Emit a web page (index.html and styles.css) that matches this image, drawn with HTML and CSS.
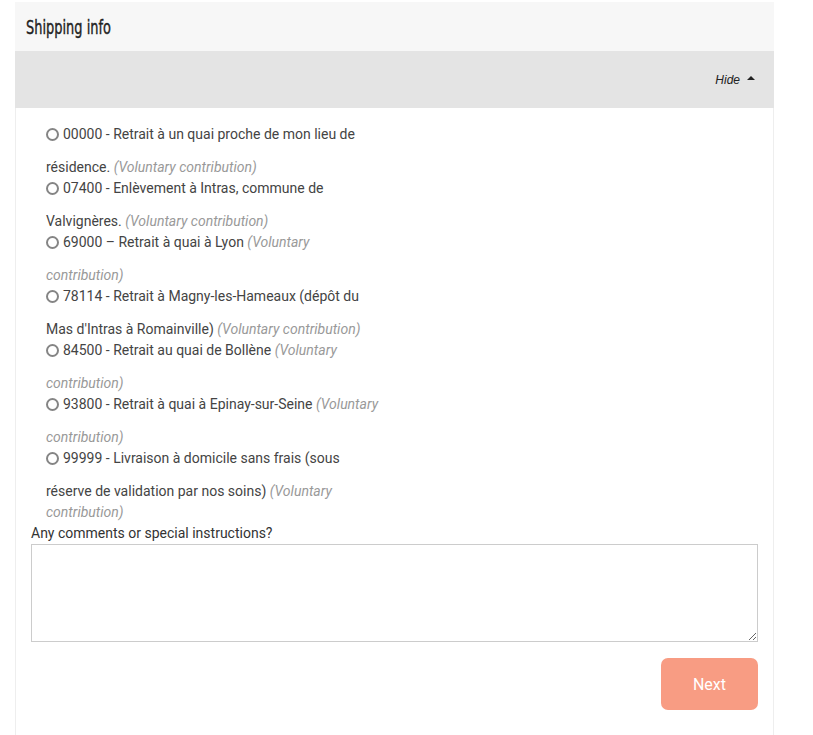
FILE: index.html
```html
<!DOCTYPE html>
<html>
<head>
<meta charset="utf-8">
<link rel="stylesheet" href="styles.css">
</head>
<body>
<div class="card">
  <div class="card-head"><h2 class="title">Shipping info</h2></div>
  <div class="toggle-bar"><span class="hide">Hide</span><span class="caret"></span></div>
  <div class="card-body">
    <ul class="options">
      <li class="opt"><span class="radio-box"><span class="radio"></span></span>00000 - Retrait à un quai proche de mon lieu de résidence. <em class="note">(Voluntary contribution)</em></li>
      <li class="opt"><span class="radio-box"><span class="radio"></span></span>07400 - Enlèvement à Intras, commune de Valvignères. <em class="note">(Voluntary contribution)</em></li>
      <li class="opt"><span class="radio-box"><span class="radio"></span></span>69000 – Retrait à quai à Lyon <em class="note">(Voluntary contribution)</em></li>
      <li class="opt"><span class="radio-box"><span class="radio"></span></span>78114 - Retrait à Magny-les-Hameaux (dépôt du Mas d'Intras à Romainville) <em class="note">(Voluntary contribution)</em></li>
      <li class="opt"><span class="radio-box"><span class="radio"></span></span>84500 - Retrait au quai de Bollène <em class="note">(Voluntary contribution)</em></li>
      <li class="opt"><span class="radio-box"><span class="radio"></span></span>93800 - Retrait à quai à Epinay-sur-Seine <em class="note">(Voluntary contribution)</em></li>
      <li class="opt"><span class="radio-box"><span class="radio"></span></span>99999 - Livraison à domicile sans frais (sous réserve de validation par nos soins) <em class="note">(Voluntary contribution)</em></li>
    </ul>
    <label class="comments-label">Any comments or special instructions?</label>
    <textarea class="comments"></textarea>
    <div class="actions"><button class="next">Next</button></div>
  </div>
</div>
</body>
</html>
```
FILE: styles.css
```css
html, body {
  margin: 0;
  padding: 0;
  background: #fff;
}
body {
  font-family: Roboto, "Liberation Sans", sans-serif;
}
.card {
  margin: 2px 0 0 15px;
  width: 759px;
  box-sizing: border-box;
  height: 733px;
  border-left: 1px solid #eeeeee;
  border-right: 1px solid #eeeeee;
}
.card-head {
  background: #f7f7f7;
  height: 49px;
  display: flex;
  align-items: center;
  padding-left: 11px;
  margin-left: -1px;
  margin-right: -1px;
}
.title {
  margin: 0;
  font-family: "DejaVu Sans Condensed", "DejaVu Sans", sans-serif;
  font-weight: normal;
  font-size: 18px;
  color: #222;
  -webkit-text-stroke: 0.35px #222;
  transform: scale(0.8, 1.12);
  transform-origin: left center;
  white-space: nowrap;
}
.toggle-bar {
  background: #e4e4e4;
  height: 57px;
  display: flex;
  align-items: center;
  justify-content: flex-end;
  padding-right: 19px;
  margin-left: -1px;
  margin-right: -1px;
}
.hide {
  font-family: "Liberation Sans", Arial, sans-serif;
  font-style: italic;
  font-size: 12px;
  color: #222;
  margin-top: 1px;
}
.caret {
  display: inline-block;
  width: 0;
  height: 0;
  border-left: 4px solid transparent;
  border-right: 4px solid transparent;
  border-bottom: 4px solid #222;
  margin-left: 7px;
  margin-bottom: 3px;
}
.card-body {
  padding: 16px 15px 0 15px;
}
.options {
  list-style: none;
  margin: 0;
  padding: 0 0 0 15px;
  width: 340px;
}
.opt {
  font-size: 14px;
  line-height: 21px;
  color: #444;
}
.radio-box {
  display: inline-block;
  vertical-align: top;
  height: 33px;
  width: 17px;
}
.radio {
  display: block;
  width: 9px;
  height: 9px;
  border: 2px solid #858585;
  border-radius: 50%;
  margin-top: 4px;
  margin-left: 0;
}
.note {
  color: #999;
  font-style: italic;
}
.comments-label {
  display: block;
  font-size: 14px;
  line-height: 21px;
  color: #333;
}
.comments {
  display: block;
  width: 727px;
  height: 98px;
  box-sizing: border-box;
  border: 1px solid #cccccc;
  margin: 0;
  padding: 6px;
  background: #fff;
}
.actions {
  display: flex;
  justify-content: flex-end;
  margin-top: 16px;
  width: 727px;
}
.next {
  width: 97px;
  height: 52px;
  background: #f89c83;
  border: none;
  border-radius: 7px;
  color: #fff;
  font-family: Roboto, "Open Sans", sans-serif;
  font-size: 16px;
}
```
